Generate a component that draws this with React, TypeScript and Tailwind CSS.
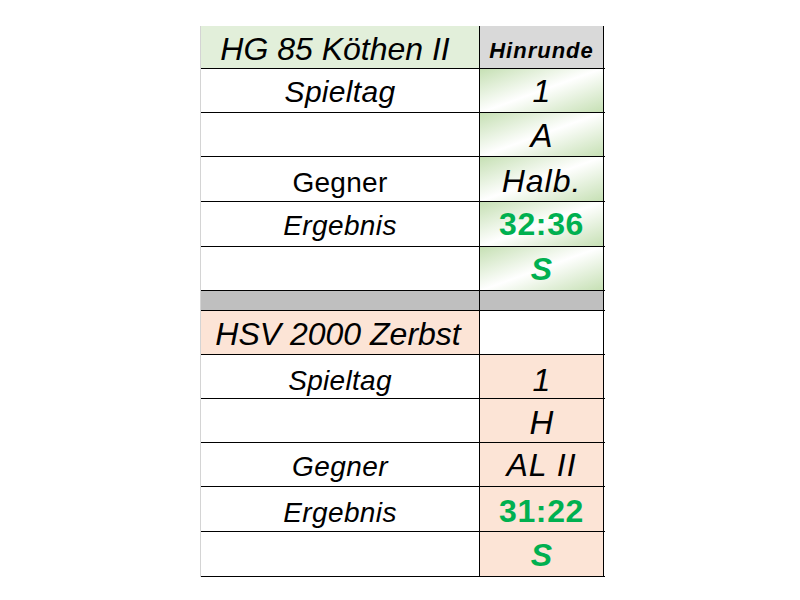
import React from "react";

const green = "bg-[linear-gradient(160deg,#c6e0b4_0%,#ffffff_50%,#c6e0b4_100%)]";

type Row = {
  h: string;
  left: React.ReactNode;
  leftBg?: string;
  right: React.ReactNode;
  rightBg?: string;
};

export default function App() {
  const L = (t: string, cls: string) => <span className={cls}>{t}</span>;
  const rows: Row[] = [
    { h: "h-[43px]", left: L("HG 85 Köthen II", "italic text-[32px] pb-[3px] mr-[10px]"), leftBg: "bg-[#e2efda]", right: L("Hinrunde", "italic font-bold text-[22px] tracking-[1px] pb-[6px]"), rightBg: "bg-[#d9d9d9]" },
    { h: "h-[44px]", left: L("Spieltag", "italic text-[30px] tracking-[0.3px] pb-[5px]"), right: L("1", "italic text-[32px] pb-[5px]"), rightBg: green },
    { h: "h-[44px]", left: null, right: L("A", "italic text-[33px] pb-[4px]"), rightBg: green },
    { h: "h-[45px]", left: L("Gegner", "text-[28px] tracking-[0.3px] pb-[4px]"), right: L("Halb.", "italic text-[32px] tracking-[1px] pb-[4px]"), rightBg: green },
    { h: "h-[45px]", left: L("Ergebnis", "italic text-[28px] tracking-[0.4px] pb-[6px]"), right: L("32:36", "font-bold text-[32px] tracking-[0.6px] text-[#00b050] pb-[6px]"), rightBg: green },
    { h: "h-[44px]", left: null, right: L("S", "italic font-bold text-[32px] text-[#00b050] pb-[5px]"), rightBg: green },
    { h: "h-[20px]", left: null, leftBg: "bg-[#bfbfbf]", right: null, rightBg: "bg-[#bfbfbf]" },
    { h: "h-[44px]", left: L("HSV 2000 Zerbst", "italic text-[32px] pb-[4px] mr-[4px]"), leftBg: "bg-[#fce4d6]", right: null },
    { h: "h-[44px]", left: L("Spieltag", "italic text-[28px] tracking-[0.3px] pb-[3px]"), right: L("1", "italic text-[32px] pb-[2px]"), rightBg: "bg-[#fce4d6]" },
    { h: "h-[44px]", left: null, right: L("H", "italic text-[33px] pb-[3px]"), rightBg: "bg-[#fce4d6]" },
    { h: "h-[44px]", left: L("Gegner", "italic text-[28px] tracking-[0.4px] pb-[5px]"), right: L("AL II", "italic text-[32px] tracking-[1px] pb-[5px]"), rightBg: "bg-[#fce4d6]" },
    { h: "h-[45px]", left: L("Ergebnis", "italic text-[28px] tracking-[0.4px] pb-[4px]"), right: L("31:22", "font-bold text-[32px] tracking-[0.6px] text-[#00b050] pb-[4px]"), rightBg: "bg-[#fce4d6]" },
    { h: "h-[45px]", left: null, right: L("S", "italic font-bold text-[32px] text-[#00b050] pb-[5px]"), rightBg: "bg-[#fce4d6]" },
  ];
  return (
    <div className="w-[800px] h-[600px] bg-white pt-[26px] pl-[200px]" style={{ fontFamily: '"Liberation Sans", Arial, sans-serif' }}>
      <div className="w-[405px] border-l border-[#d4d4d4] flex flex-col">
        {rows.map((r, i) => (
          <div key={i} className={`flex ${r.h} border-b border-black`}>
            <div className={`w-[278px] flex items-end justify-center leading-none text-black ${r.leftBg ?? "bg-white"}`}>{r.left}</div>
            <div className={`w-[125px] border-l border-r border-black flex items-end justify-center leading-none text-black ${r.rightBg ?? "bg-white"}`}>{r.right}</div>
          </div>
        ))}
      </div>
    </div>
  );
}
